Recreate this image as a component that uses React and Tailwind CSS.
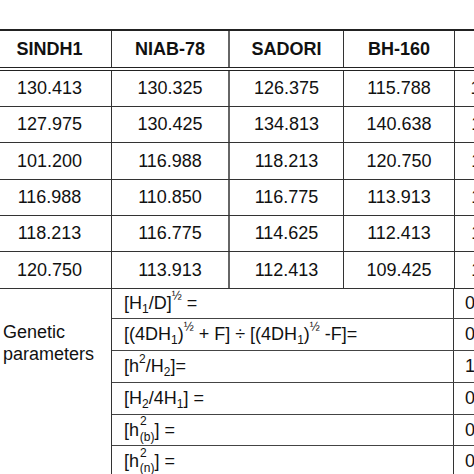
import React from 'react';

const font = { fontFamily: '"Liberation Sans", Arial, sans-serif' };

const headers = ['SINDH1', 'NIAB-78', 'SADORI', 'BH-160', ''];
const rows = [
  ['130.413', '130.325', '126.375', '115.788', '120.138'],
  ['127.975', '130.425', '134.813', '140.638', '118.575'],
  ['101.200', '116.988', '118.213', '120.750', '112.413'],
  ['116.988', '110.850', '116.775', '113.913', '114.625'],
  ['118.213', '116.775', '114.625', '112.413', '110.850'],
  ['120.750', '113.913', '112.413', '109.425', '116.775'],
];
// heights incl. bottom border so the lines land on the right pixels
const rowH = ['h-[36px]', 'h-[36px]', 'h-[37px]', 'h-[36px]', 'h-[36px]', 'h-[37px]'];

const colW = ['w-[124px]', 'w-[118px]', 'w-[114px]', 'w-[111px]', 'w-[96px]'];
const colB = [
  'border-r border-[#333]',
  'border-r-2 border-[#666]',
  'border-r border-[#333]',
  'border-r border-[#333]',
  '',
];

const Sub = ({ children, className = 'bottom-[-0.3em]' }) => (
  <sub className={`text-[12px] ${className}`}>{children}</sub>
);
const Sup = ({ children, className = 'top-[-0.75em]' }) => (
  <sup className={`text-[12px] ${className}`}>{children}</sup>
);

// h with a superscript 2 and a subscript stacked below it
const HStack = ({ sub }) => (
  <>
    h<Sup className="top-[-0.85em] ml-[1px]">2</Sup>
    <Sub className="bottom-[-0.45em] ml-[-7px]">{sub}</Sub>
  </>
);

const params = [
  { h: 'h-[30px]', f: <>[H<Sub>1</Sub>/D]<Sup>½</Sup> =</>, v: '0.553' },
  {
    h: 'h-[32px]',
    f: (
      <>
        [(4DH<Sub>1</Sub>)<Sup>½</Sup> + F] ÷ [(4DH<Sub>1</Sub>)<Sup>½</Sup> -F]=
      </>
    ),
    v: '0.876',
  },
  { h: 'h-[32px]', f: <>[h<Sup>2</Sup>/H<Sub>2</Sub>]=</>, v: '1.049' },
  { h: 'h-[32px]', f: <>[H<Sub>2</Sub>/4H<Sub>1</Sub>] =</>, v: '0.231' },
  { h: 'h-[31px]', f: <>[<HStack sub="(b)" />] =</>, v: '0.812' },
  { h: 'h-[32px]', f: <>[<HStack sub="(n)" />] =</>, v: '0.394' },
];

export default function App() {
  return (
    <div className="w-[474px] h-[474px] overflow-hidden bg-white text-[#111]" style={font}>
      <div className="pt-[29px] ml-[-12px] w-[700px]">
        <div className="border-t-2 border-[#222]">
          {/* header */}
          <div className="flex h-[40px] border-b-4 border-double border-[#222]">
            {headers.map((h, i) => (
              <div
                key={i}
                className={`${colW[i]} ${colB[i]} shrink-0 flex items-center justify-center text-[18px] font-bold`}
              >
                {h}
              </div>
            ))}
          </div>

          {/* data rows */}
          {rows.map((r, ri) => (
            <div key={ri} className={`flex ${rowH[ri]} border-b border-[#333]`}>
              {r.map((v, i) => (
                <div
                  key={i}
                  className={`${colW[i]} ${colB[i]} shrink-0 flex items-center justify-center text-[18px]`}
                >
                  {v}
                </div>
              ))}
            </div>
          ))}

          {/* genetic parameters */}
          <div className="flex">
            <div className="w-[124px] shrink-0 border-r border-[#333] pt-[32px] pl-[15px] text-[18px] leading-[22px]">
              Genetic
              <br />
              parameters
            </div>
            <div className="flex flex-col">
              {params.map((p, i) => (
                <div key={i} className={`flex ${p.h} border-b border-[#444]`}>
                  <div className="w-[342px] shrink-0 border-r border-[#333] flex items-center pl-[12px] text-[18px] whitespace-nowrap">
                    <span>{p.f}</span>
                  </div>
                  <div className="w-[96px] shrink-0 flex items-center pl-[11px] text-[18px]">
                    {p.v}
                  </div>
                </div>
              ))}
            </div>
          </div>
        </div>
      </div>
    </div>
  );
}
